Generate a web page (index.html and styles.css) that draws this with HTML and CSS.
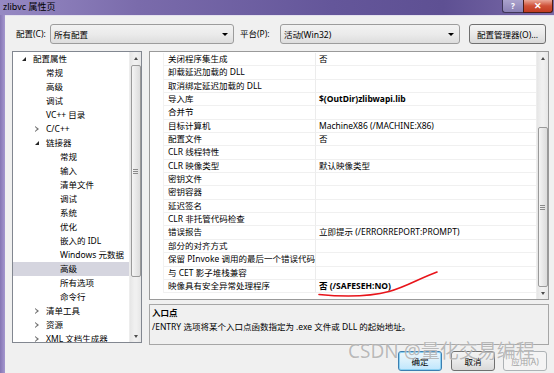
FILE: index.html
```html
<!DOCTYPE html>
<html lang="zh">
<head>
<meta charset="utf-8">
<title>zlibvc 属性页</title>
<link rel="stylesheet" href="styles.css">
</head>
<body>
<div class="window">
  <div class="titlebar">
    <span class="title">zlibvc 属性页</span>
    <div class="tb-btns">
      <span class="tb-help">?</span>
      <span class="tb-close">✕</span>
    </div>
  </div>
  <div class="frame">
    <div class="frame-edge"></div>
    <div class="client">
      <div class="toprow">
        <span class="lbl lbl-config">配置(C):</span>
        <div class="combo combo-config"><span class="combo-text">所有配置</span><span class="combo-arrow"></span></div>
        <span class="lbl lbl-plat">平台(P):</span>
        <div class="combo combo-plat"><span class="combo-text">活动(Win32)</span><span class="combo-arrow"></span></div>
        <div class="btn btn-mgr">配置管理器(O)...</div>
      </div>
      <div class="main">
        <div class="tree">
          <div class="tree-items">
            <div class="ti l0"><span class="tw exp"></span>配置属性</div>
            <div class="ti l1"><span class="tw"></span>常规</div>
            <div class="ti l1"><span class="tw"></span>高级</div>
            <div class="ti l1"><span class="tw"></span>调试</div>
            <div class="ti l1"><span class="tw"></span>VC++ 目录</div>
            <div class="ti l1"><span class="tw col"></span>C/C++</div>
            <div class="ti l1"><span class="tw exp"></span>链接器</div>
            <div class="ti l2"><span class="tw"></span>常规</div>
            <div class="ti l2"><span class="tw"></span>输入</div>
            <div class="ti l2"><span class="tw"></span>清单文件</div>
            <div class="ti l2"><span class="tw"></span>调试</div>
            <div class="ti l2"><span class="tw"></span>系统</div>
            <div class="ti l2"><span class="tw"></span>优化</div>
            <div class="ti l2"><span class="tw"></span>嵌入的 IDL</div>
            <div class="ti l2"><span class="tw"></span>Windows 元数据</div>
            <div class="ti l2 sel"><span class="tw"></span>高级</div>
            <div class="ti l2"><span class="tw"></span>所有选项</div>
            <div class="ti l2"><span class="tw"></span>命令行</div>
            <div class="ti l1"><span class="tw col"></span>清单工具</div>
            <div class="ti l1"><span class="tw col"></span>资源</div>
            <div class="ti l1"><span class="tw col"></span>XML 文档生成器</div>
          </div>
          <div class="vscroll vs-tree">
            <div class="sb-btn"><span class="ar-up"></span></div>
            <div class="sb-track"><div class="sb-thumb"><span class="grip"></span></div></div>
            <div class="sb-btn"><span class="ar-down"></span></div>
          </div>
        </div>
        <div class="rightcol">
          <div class="grid">
            <div class="grid-rows">
              <div class="gr"><span class="gg"></span><span class="gn">关闭程序集生成</span><span class="gv">否</span></div>
              <div class="gr"><span class="gg"></span><span class="gn">卸载延迟加载的 DLL</span><span class="gv"></span></div>
              <div class="gr"><span class="gg"></span><span class="gn">取消绑定延迟加载的 DLL</span><span class="gv"></span></div>
              <div class="gr"><span class="gg"></span><span class="gn">导入库</span><span class="gv b">$(OutDir)zlibwapi.lib</span></div>
              <div class="gr"><span class="gg"></span><span class="gn">合并节</span><span class="gv"></span></div>
              <div class="gr"><span class="gg"></span><span class="gn">目标计算机</span><span class="gv">MachineX86 (/MACHINE:X86)</span></div>
              <div class="gr"><span class="gg"></span><span class="gn">配置文件</span><span class="gv">否</span></div>
              <div class="gr"><span class="gg"></span><span class="gn">CLR 线程特性</span><span class="gv"></span></div>
              <div class="gr"><span class="gg"></span><span class="gn">CLR 映像类型</span><span class="gv">默认映像类型</span></div>
              <div class="gr"><span class="gg"></span><span class="gn">密钥文件</span><span class="gv"></span></div>
              <div class="gr"><span class="gg"></span><span class="gn">密钥容器</span><span class="gv"></span></div>
              <div class="gr"><span class="gg"></span><span class="gn">延迟签名</span><span class="gv"></span></div>
              <div class="gr"><span class="gg"></span><span class="gn">CLR 非托管代码检查</span><span class="gv"></span></div>
              <div class="gr"><span class="gg"></span><span class="gn">错误报告</span><span class="gv">立即提示 (/ERRORREPORT:PROMPT)</span></div>
              <div class="gr"><span class="gg"></span><span class="gn">部分的对齐方式</span><span class="gv"></span></div>
              <div class="gr"><span class="gg"></span><span class="gn">保留 PInvoke 调用的最后一个错误代码</span><span class="gv"></span></div>
              <div class="gr"><span class="gg"></span><span class="gn">与 CET 影子堆栈兼容</span><span class="gv"></span></div>
              <div class="gr"><span class="gg"></span><span class="gn">映像具有安全异常处理程序</span><span class="gv b">否 (/SAFESEH:NO)</span></div>
            </div>
            <div class="vscroll vs-grid">
              <div class="sb-btn"><span class="ar-up"></span></div>
              <div class="sb-track"><div class="sb-thumb"><span class="grip"></span></div></div>
              <div class="sb-btn"><span class="ar-down"></span></div>
            </div>
          </div>
          <div class="desc">
            <div class="desc-title">入口点</div>
            <div class="desc-text">/ENTRY 选项将某个入口点函数指定为 .exe 文件或 DLL 的起始地址。</div>
          </div>
        </div>
      </div>
      <div class="btnrow">
        <div class="btn btn-ok">确定</div>
        <div class="btn btn-cancel">取消</div>
        <div class="btn btn-apply">应用(A)</div>
      </div>
    </div>
  </div>
  <svg class="squiggle" width="554" height="373" viewBox="0 0 554 373">
    <path d="M319 294.5 C 345 297, 372 296, 389 291.5 S 418 279, 437 272" fill="none" stroke="#e8141a" stroke-width="1.6" stroke-linecap="round"/>
  </svg>
  <div class="watermark">CSDN @量化交易编程</div>
</div>
</body>
</html>
```
FILE: styles.css
```css
* { box-sizing: border-box; }
html, body { margin: 0; padding: 0; }
body {
  width: 554px;
  height: 373px;
  overflow: hidden;
  font-family: "Noto Sans", "Noto Sans CJK SC", sans-serif;
  font-size: 8.5px;
  color: #000;
  background: #f0f0f0;
}
.window {
  position: relative;
  width: 554px;
  height: 373px;
  display: flex;
  flex-direction: column;
}
.titlebar {
  height: 15px;
  flex: none;
  display: flex;
  align-items: flex-start;
  background: linear-gradient(to right, #9689c3 0%, #7a6bab 25%, #64569a 60%, #5e5093 80%, #7a6aa8 100%);
}
.title {
  padding: 1px 0 0 3px;
  font-size: 9px;
  line-height: 12px;
}
.tb-btns {
  margin-left: auto;
  margin-right: 1px;
  display: flex;
}
.tb-help {
  width: 21px;
  height: 13px;
  border: 1px solid #3f3658;
  border-top: none;
  border-right: none;
  border-radius: 0 0 0 3px;
  background: linear-gradient(#aaa2cc, #8a80b4);
  color: #fff;
  font-size: 8px;
  font-weight: bold;
  line-height: 12px;
  text-align: center;
}
.tb-close {
  width: 30px;
  height: 13px;
  border: 1px solid #4a1c16;
  border-top: none;
  border-radius: 0 0 3px 0;
  background: linear-gradient(#e9a797, #cf5036 50%, #c23b20);
  color: #fff;
  font-size: 9px;
  font-weight: bold;
  line-height: 12px;
  text-align: center;
}
.frame {
  flex: 1;
  display: flex;
  min-height: 0;
}
.frame-edge {
  width: 5px;
  flex: none;
  background: linear-gradient(to right, #8576b4, #a597cf);
}
.client {
  flex: 1;
  padding: 9px 0 0 7px;
  background: #f0f0f0;
  border-top: 1px solid #e4e1ee;
  min-width: 0;
}
.toprow {
  display: flex;
  align-items: center;
  height: 20px;
  margin-top: -1px;
}
.lbl {
  flex: none;
  line-height: 20px;
  white-space: nowrap;
}
.lbl-config { width: 34px; margin-left: 4px; }
.lbl-plat { width: 40px; margin-left: 6px; }
.combo {
  flex: none;
  height: 20px;
  display: flex;
  align-items: center;
  border: 1px solid #9c9c9c;
  border-radius: 3px;
  background: linear-gradient(#f2f2f2, #ebebeb 50%, #dddddd);
  padding: 0 5px 0 3px;
}
.combo-config { width: 184px; }
.combo-plat { width: 180px; }
.combo-text { flex: 1; white-space: nowrap; }
.combo-arrow {
  width: 0;
  height: 0;
  border-left: 3px solid transparent;
  border-right: 3px solid transparent;
  border-top: 3px solid #000;
}
.btn {
  flex: none;
  height: 20px;
  display: flex;
  align-items: center;
  justify-content: center;
  border: 1px solid #707070;
  border-radius: 3px;
  background: linear-gradient(#f4f4f4, #e9e9e9 50%, #d9d9d9);
  white-space: nowrap;
}
.btn-mgr { width: 77px; margin-left: 9px; }
.main {
  display: flex;
  margin-top: 7px;
  height: 294px;
}
.tree {
  width: 130px;
  height: 292px;
  flex: none;
  display: flex;
  border: 1px solid #828790;
  background: #fff;
}
.tree-items {
  flex: 1;
  min-width: 0;
  overflow: hidden;
}
.ti {
  height: 14px;
  line-height: 14px;
  display: flex;
  align-items: center;
  white-space: nowrap;
}
.ti.l0 { padding-left: 7px; }
.ti.l1 { padding-left: 20px; }
.ti.l2 { padding-left: 34px; }
.ti.sel { background: #d5d5df; }
.tw {
  width: 10px;
  height: 14px;
  flex: none;
  margin-right: 3px;
  position: relative;
}
.tw.exp::before {
  content: "";
  position: absolute;
  left: 2px;
  top: 5px;
  width: 0;
  height: 0;
  border-left: 4px solid transparent;
  border-bottom: 4px solid #262626;
}
.tw.col::before {
  content: "";
  position: absolute;
  left: 2px;
  top: 4px;
  width: 0;
  height: 0;
  border-top: 3px solid transparent;
  border-bottom: 3px solid transparent;
  border-left: 4px solid #707070;
}
.tw.col::after {
  content: "";
  position: absolute;
  left: 2px;
  top: 5px;
  width: 0;
  height: 0;
  border-top: 2px solid transparent;
  border-bottom: 2px solid transparent;
  border-left: 2px solid #fff;
}
.vscroll {
  width: 12px;
  flex: none;
  display: flex;
  flex-direction: column;
  background: linear-gradient(to right, #e6e6e6, #f0f0f0 40%, #f0f0f0 60%, #e6e6e6);
  border-left: 1px solid #ededed;
}
.sb-btn {
  height: 12px;
  flex: none;
  display: flex;
  align-items: center;
  justify-content: center;
}
.ar-up {
  width: 0;
  height: 0;
  border-left: 2.5px solid transparent;
  border-right: 2.5px solid transparent;
  border-bottom: 3px solid #4d4d4d;
}
.ar-down {
  width: 0;
  height: 0;
  border-left: 2.5px solid transparent;
  border-right: 2.5px solid transparent;
  border-top: 3px solid #4d4d4d;
}
.sb-track {
  flex: 1;
  padding: 0 0.5px;
}
.sb-thumb {
  border: 1px solid #9a9a9a;
  border-radius: 2px;
  background: linear-gradient(to right, #f5f5f5, #e8e8e8 50%, #dcdcdc);
  display: flex;
  align-items: center;
  justify-content: center;
}
.vs-tree .sb-thumb { margin-top: 1px; height: 212px; }
.vs-grid .sb-thumb { margin-top: 63px; height: 160px; }
.grip {
  width: 5px;
  height: 5px;
  border-top: 1px solid #8a8a8a;
  border-bottom: 1px solid #8a8a8a;
  position: relative;
}
.grip::after {
  content: "";
  position: absolute;
  left: 0;
  right: 0;
  top: 1px;
  border-top: 1px solid #8a8a8a;
}
.rightcol {
  width: 400px;
  flex: none;
  margin-left: 7px;
  display: flex;
  flex-direction: column;
}
.grid {
  height: 249px;
  flex: none;
  display: flex;
  border: 1px solid #9a9a9a;
  background: #fff;
}
.grid-rows {
  flex: 1;
  min-width: 0;
  padding-top: 1px;
}
.gr {
  height: 13.35px;
  display: flex;
  line-height: 12.35px;
  white-space: nowrap;
}
.gg {
  width: 14px;
  flex: none;
  border-right: 1px solid #f2f2f2;
}
.gn {
  width: 152px;
  flex: none;
  padding-left: 4px;
  overflow: hidden;
  border-bottom: 1px solid #f0f0f0;
  border-right: 1px solid #ececec;
}
.gv {
  flex: 1;
  padding-left: 3px;
  overflow: hidden;
  border-bottom: 1px solid #f0f0f0;
}
.gv.b { font-weight: bold; }
.desc {
  margin-top: 4px;
  height: 41px;
  flex: none;
  border: 1px solid #a6a6a6;
  background: #f0f0f0;
  padding: 1px 0 0 2px;
  line-height: 14px;
}
.desc-title { font-weight: bold; }
.btnrow {
  display: flex;
  justify-content: flex-end;
  width: 537px;
  margin-top: 6px;
  padding-right: 2px;
}
.btnrow .btn { width: 44px; }
.btn-ok {
  border-color: #3c7fb1;
  background: linear-gradient(#eaf6fd, #d9f0fc 50%, #bee6fd);
  box-shadow: inset 0 0 0 1px #8ad0f2;
}
.btn-cancel { margin-left: 9px; }
.btn-apply {
  margin-left: 8px;
  color: #a3a3a3;
  border-color: #adb2b5;
  background: #f4f4f4;
}
.squiggle {
  position: absolute;
  left: 0;
  top: 0;
  pointer-events: none;
}
.watermark {
  position: absolute;
  left: 348px;
  top: 341px;
  font-size: 19px;
  line-height: 21px;
  color: rgba(140, 140, 140, 0.6);
  text-shadow: 0 0 1px rgba(255, 255, 255, 0.9);
  white-space: nowrap;
  pointer-events: none;
}
```
